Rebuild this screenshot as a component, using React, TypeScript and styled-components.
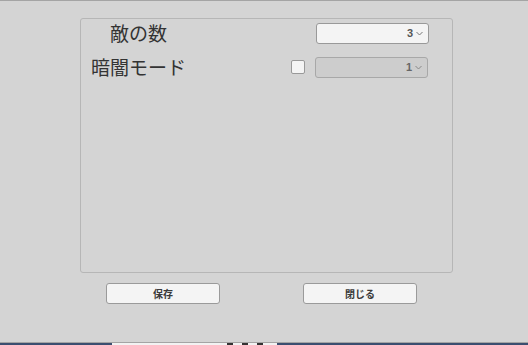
import * as React from 'react';
import styled, { createGlobalStyle } from 'styled-components';

const GlobalStyle = createGlobalStyle`
    html, body {
        margin: 0;
        padding: 0;
        background: #d4d4d4;
        overflow: hidden;
    }
    * {
        box-sizing: border-box;
    }
`

const Window = styled.div`
    width: 528px;
    height: 345px;
    display: flex;
    flex-direction: column;
    background: #d4d4d4;
    border-top: 1px solid #a4a4a4;
    font-family: "Noto Sans CJK JP", "Liberation Sans", sans-serif;
    color: #333333;
`

const Content = styled.div`
    flex: 1 0 0;
    padding: 17px 0 0 80px;
    display: flex;
    flex-direction: column;
`

const Panel = styled.div`
    width: 373px;
    height: 255px;
    border: 1px solid #b6b6b6;
    border-radius: 3px;
    padding-top: 4px;
    display: flex;
    flex-direction: column;
    gap: 14px;
`

const Row = styled.div<{ $indent: number; $right: number }>`
    height: 20px;
    display: flex;
    align-items: center;
    padding-left: ${p => p.$indent}px;
    padding-right: ${p => p.$right}px;
`

const Label = styled.div`
    flex: 1 0 0;
    font-size: 19px;
    line-height: 20px;
    color: #333333;
    white-space: nowrap;
`

const Select = styled.div<{ $disabled?: boolean }>`
    width: 113px;
    height: 21px;
    border: 1px solid ${p => (p.$disabled ? '#a8a8a8' : '#999999')};
    border-radius: 3px;
    background: ${p => (p.$disabled ? '#cdcdcd' : '#f4f4f4')};
    display: flex;
    align-items: center;
    justify-content: flex-end;
    gap: 3px;
    padding-right: 5px;
    font-family: "Liberation Sans", sans-serif;
    font-size: 11px;
    font-weight: bold;
    color: ${p => (p.$disabled ? '#666666' : '#555555')};
`

const Checkbox = styled.div`
    width: 14px;
    height: 14px;
    border: 1px solid #999999;
    border-radius: 2px;
    background: #f4f4f4;
    margin-right: 10px;
`

const Chevron = ({ color }: { color: string }) => (
    <svg width="7" height="5" viewBox="0 0 7 5">
        <path d="M0.5 1 L3.5 4 L6.5 1" fill="none" stroke={color} strokeWidth="1" />
    </svg>
)

const ButtonRow = styled.div`
    display: flex;
    padding: 10px 0 0 26px;
    gap: 83px;
`

const Button = styled.div`
    width: 114px;
    height: 21px;
    border: 1px solid #9a9a9a;
    border-radius: 3px;
    background: #f4f4f4;
    display: flex;
    align-items: center;
    justify-content: center;
    font-size: 10px;
    font-weight: bold;
    color: #3a3a3a;
`

const Taskbar = styled.div`
    height: 3px;
    border-top: 1px solid #a4a4a4;
    background: #3b4e70;
    display: flex;
    padding-left: 112px;
`

const TaskItem = styled.div`
    width: 165px;
    height: 2px;
    background: #f2f2f2;
    overflow: hidden;
    display: flex;
    gap: 9px;
    padding-left: 115px;
`

const TaskMark = styled.span`
    width: 6px;
    height: 2px;
    background: #333333;
`

export default function App() {
    return (
        <>
            <GlobalStyle />
            <Window>
                <Content>
                    <Panel>
                        <Row $indent={29} $right={23}>
                            <Label>敵の数</Label>
                            <Select>
                                <span>3</span>
                                <Chevron color="#777777" />
                            </Select>
                        </Row>
                        <Row $indent={10} $right={24}>
                            <Label>暗闇モード</Label>
                            <Checkbox />
                            <Select $disabled>
                                <span>1</span>
                                <Chevron color="#888888" />
                            </Select>
                        </Row>
                    </Panel>
                    <ButtonRow>
                        <Button>保存</Button>
                        <Button>閉じる</Button>
                    </ButtonRow>
                </Content>
                <Taskbar>
                    <TaskItem>
                        <TaskMark />
                        <TaskMark />
                        <TaskMark />
                    </TaskItem>
                </Taskbar>
            </Window>
        </>
    );
}
